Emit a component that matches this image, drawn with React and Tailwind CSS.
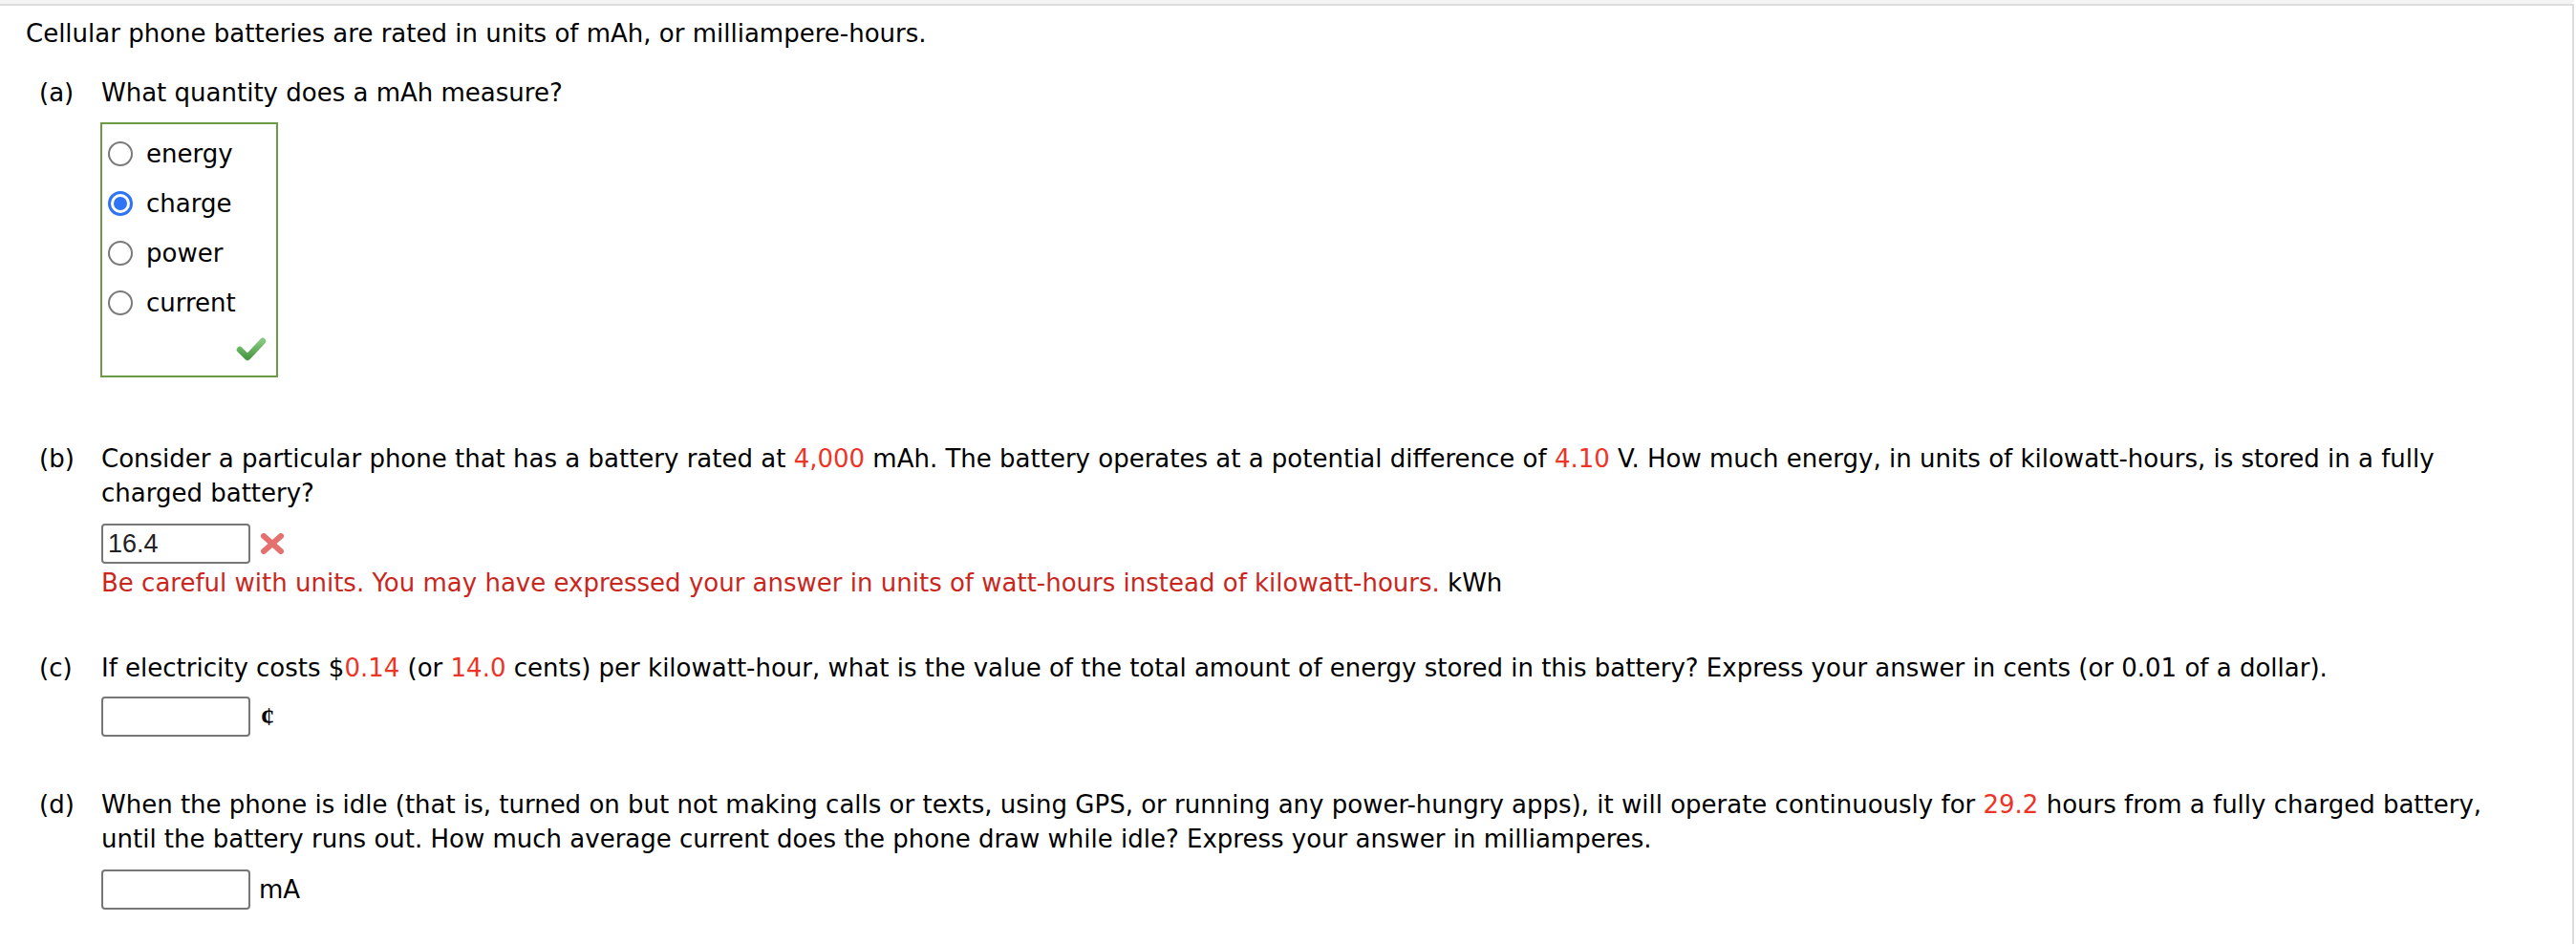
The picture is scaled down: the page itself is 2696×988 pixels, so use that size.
import React from "react";

function Radio({ checked }) {
  if (checked) {
    return (
      <span className="w-[26px] h-[26px] rounded-full border-[3px] border-[#2f74f5] bg-white flex items-center justify-center shrink-0">
        <span className="w-[14px] h-[14px] rounded-full bg-[#2f74f5]" />
      </span>
    );
  }
  return <span className="w-[26px] h-[26px] rounded-full border-2 border-[#7a7a7a] bg-white shrink-0" />;
}

function Check() {
  return (
    <svg width="32" height="27" viewBox="0 0 32 27">
      <defs>
        <linearGradient id="cg" x1="0" y1="0" x2="0" y2="1">
          <stop offset="0" stopColor="#86c77f" />
          <stop offset="1" stopColor="#4a9a45" />
        </linearGradient>
      </defs>
      <path d="M4 13 L12 21 L28 4" stroke="url(#cg)" strokeWidth="6.5" fill="none" strokeLinecap="round" strokeLinejoin="round" />
    </svg>
  );
}

function XMark() {
  return (
    <svg width="28" height="26" viewBox="0 0 28 26">
      <g stroke="#e26464" strokeWidth="6" strokeLinecap="round" opacity="0.92">
        <path d="M5 5 L23 21" />
        <path d="M23 5 L5 21" />
      </g>
    </svg>
  );
}

function Box({ children }) {
  return (
    <div className="w-[156px] h-[42px] border-2 border-[#777777] rounded-[4px] px-[5px] flex items-center font-['Liberation_Sans',Arial,sans-serif] text-[27px] text-[#222222] bg-white shrink-0">
      {children}
    </div>
  );
}

const R = ({ children }) => <span className="text-[#ec3427]">{children}</span>;

function Part({ label, children, className }) {
  return (
    <div className={"flex " + (className || "")}>
      <span className="w-[65px] shrink-0">{label}</span>
      <div className="flex flex-col">{children}</div>
    </div>
  );
}

export default function App() {
  const options = ["energy", "charge", "power", "current"];
  return (
    <div className="w-[2696px] h-[988px] bg-white overflow-hidden font-['DejaVu_Sans',Verdana,sans-serif] text-[26px] leading-[36px] text-black">
      <div className="h-[4px] bg-[#f4f4f4] mr-[2px] rounded-br-[4px]" />
      <div className="h-[984px] mr-[2px] border-t-2 border-r-2 border-[#dcdcdc] pl-[27px] pt-[11px]">
        <p className="whitespace-nowrap">Cellular phone batteries are rated in units of mAh, or milliampere-hours.</p>

        <div className="pl-[14px]">
          <Part label="(a)" className="mt-[26px]">
            <span className="whitespace-nowrap">What quantity does a mAh measure?</span>
          </Part>
          <div className="ml-[64px] mt-[13px] w-[186px] h-[267px] border-2 border-[#6b9b45] pt-[5px] flex flex-col">
            {options.map((o) => (
              <div key={o} className="h-[52px] flex items-center pl-[6px] gap-[14px]">
                <Radio checked={o === "charge"} />
                <span>{o}</span>
              </div>
            ))}
            <div className="flex justify-end pr-[10px] mt-[10px]">
              <Check />
            </div>
          </div>

          <Part label="(b)" className="mt-[67px]">
            <span className="whitespace-nowrap">
              Consider a particular phone that has a battery rated at <R>4,000</R> mAh. The battery operates at a potential difference of <R>4.10</R> V. How much energy, in units of kilowatt-hours, is stored in a fully
            </span>
            <span className="whitespace-nowrap">charged battery?</span>
            <div className="mt-[14px] flex items-center gap-[9px]">
              <Box>16.4</Box>
              <XMark />
            </div>
            <span className="whitespace-nowrap mt-[2px]">
              <span className="text-[#c9271d]">Be careful with units. You may have expressed your answer in units of watt-hours instead of kilowatt-hours.</span> kWh
            </span>
          </Part>

          <Part label="(c)" className="mt-[53px]">
            <span className="whitespace-nowrap">
              If electricity costs $<R>0.14</R> (or <R>14.0</R> cents) per kilowatt-hour, what is the value of the total amount of energy stored in this battery? Express your answer in cents (or 0.01 of a dollar).
            </span>
            <div className="mt-[12px] flex items-center gap-[11px]">
              <Box />
              <span className="font-['Liberation_Serif','Times_New_Roman',serif] font-bold text-[28px]">¢</span>
            </div>
          </Part>

          <Part label="(d)" className="mt-[53px]">
            <span className="whitespace-nowrap">
              When the phone is idle (that is, turned on but not making calls or texts, using GPS, or running any power-hungry apps), it will operate continuously for <R>29.2</R> hours from a fully charged battery,
            </span>
            <span className="whitespace-nowrap">until the battery runs out. How much average current does the phone draw while idle? Express your answer in milliamperes.</span>
            <div className="mt-[14px] flex items-center gap-[9px]">
              <Box />
              <span>mA</span>
            </div>
          </Part>
        </div>
      </div>
    </div>
  );
}
